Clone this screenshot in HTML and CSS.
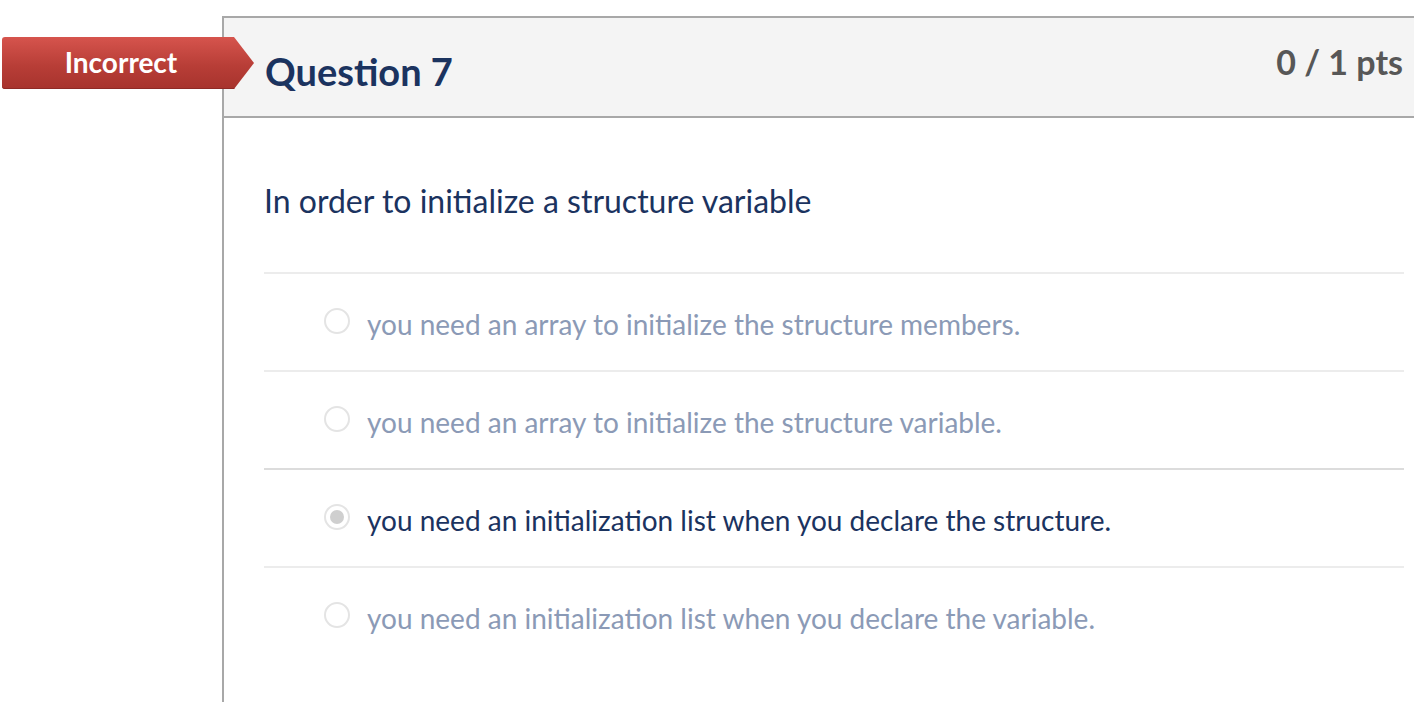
FILE: index.html
```html
<!DOCTYPE html>
<html>
<head>
<meta charset="utf-8">
<link rel="stylesheet" href="styles.css">
</head>
<body>
<div class="page">
  <div class="badge"><span>Incorrect</span></div>
  <div class="card">
    <div class="card-header">
      <h2 class="title">Question 7</h2>
      <div class="pts">0 / 1 pts</div>
    </div>
    <div class="card-body">
      <p class="question">In order to initialize a structure variable</p>
      <div class="answers">
        <div class="answer">
          <span class="radio"></span>
          <span class="label">you need an array to initialize the structure members.</span>
        </div>
        <div class="answer">
          <span class="radio"></span>
          <span class="label">you need an array to initialize the structure variable.</span>
        </div>
        <div class="answer selected">
          <span class="radio"><span class="dot"></span></span>
          <span class="label">you need an initialization list when you declare the structure.</span>
        </div>
        <div class="answer">
          <span class="radio"></span>
          <span class="label">you need an initialization list when you declare the variable.</span>
        </div>
      </div>
    </div>
  </div>
</div>
</body>
</html>
```
FILE: styles.css
```css
html, body {
  margin: 0;
  padding: 0;
  background: #ffffff;
  overflow: hidden;
  font-family: Lato, "Open Sans", "Liberation Sans", sans-serif;
}

.page {
  position: relative;
  padding-top: 16px;
  height: 686px;
}

.card {
  margin-left: 222px;
  border-top: 2px solid #a8a8a8;
  border-left: 2px solid #a8a8a8;
  height: 100%;
}

.card-header {
  background: #f4f4f4;
  border-bottom: 2px solid #a8a8a8;
  height: 98px;
  display: flex;
  justify-content: space-between;
  align-items: flex-start;
  padding: 0 11px 0 41px;
}

.title {
  margin: 0;
  margin-top: 32px;
  font-size: 38px;
  line-height: 42px;
  font-weight: 700;
  color: #1b335f;
}

.pts {
  margin-top: 24px;
  font-size: 34px;
  line-height: 40px;
  font-weight: 700;
  color: #575757;
}

.card-body {
  padding: 0 10px 0 40px;
}

.question {
  margin: 0;
  padding-top: 63px;
  font-size: 32px;
  line-height: 40px;
  color: #1b335f;
  padding-bottom: 51px;
}

.answers {
  display: flex;
  flex-direction: column;
}

.answer {
  border-top: 2px solid #ececec;
  height: 96px;
  display: flex;
  align-items: center;
  padding-left: 60px;
  gap: 17px;
  font-size: 28px;
  color: #8b9ab6;
}

.answer.selected {
  border-top-color: #dcdcdc;
  color: #1b335f;
}

.radio {
  width: 22px;
  height: 22px;
  border: 2px solid #e4e4e4;
  border-radius: 50%;
  background: #ffffff;
  display: flex;
  align-items: center;
  justify-content: center;
  flex: none;
  margin-top: -2px;
}

.dot {
  width: 14px;
  height: 14px;
  border-radius: 50%;
  background: #cfcfcf;
}

.label {
  line-height: 32px;
  margin-top: 4px;
}

.badge {
  position: absolute;
  left: 2px;
  top: 37px;
  width: 252px;
  height: 52px;
  background: linear-gradient(#d6544d, #b83e37 55%, #a7332d);
  clip-path: polygon(0 0, 232px 0, 252px 26px, 232px 52px, 0 52px);
  border-radius: 3px 0 0 3px;
  display: flex;
  align-items: center;
  box-shadow: inset 0 -1px 0 #8f2a25;
}

.badge span {
  width: 238px;
  text-align: center;
  color: #ffffff;
  font-weight: 700;
  font-size: 28px;
  line-height: 30px;
  margin-top: -2px;
}
```
